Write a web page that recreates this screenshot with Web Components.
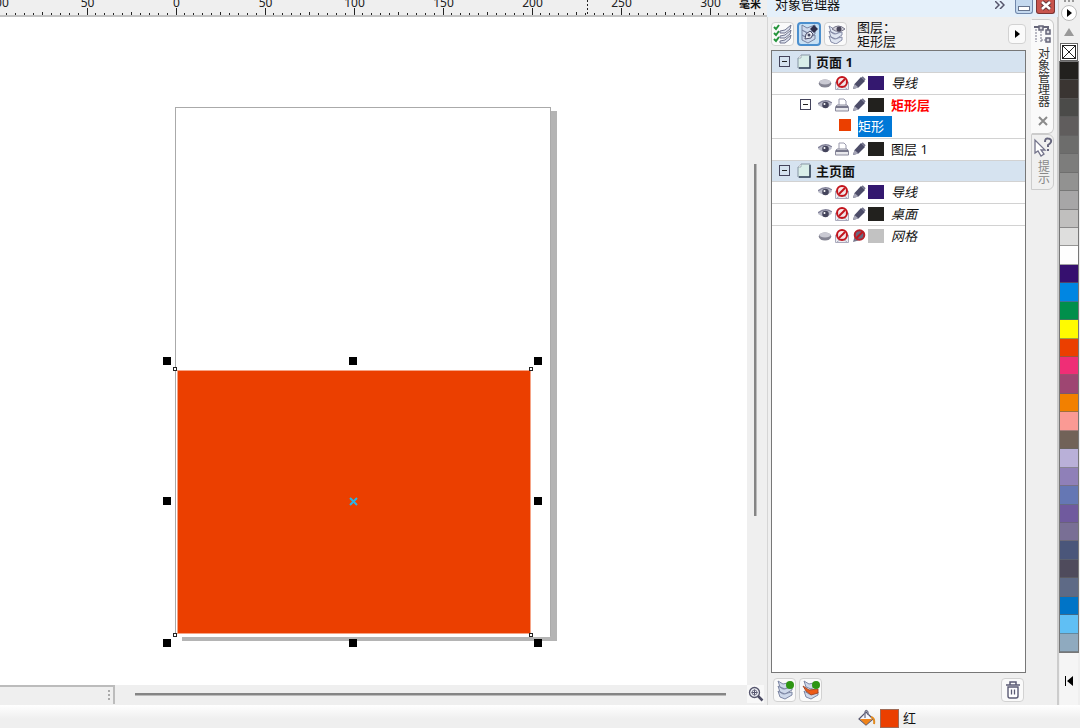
<!DOCTYPE html>
<html lang="zh-CN">
<head>
<meta charset="utf-8">
<title>对象管理器</title>
<style>
  body { margin: 0; background: #efefef; color: #111; font: 13px/16px "Noto Sans", "Noto Sans CJK SC", sans-serif; }
</style>
</head>
<body>
<draw-app></draw-app>

<script>
const BASE = `*{box-sizing:border-box} button{margin:0;padding:0;border:0;background:none;font:inherit;color:inherit;display:grid;place-items:center} svg{display:block}`;

function define(name, css, render) {
  customElements.define(name, class extends HTMLElement {
    connectedCallback() {
      if (this.shadowRoot) return;
      const t = document.createElement('template');
      t.innerHTML = `<style>${BASE}${css}</style>${render(this)}`;
      this.attachShadow({ mode: 'open' }).append(t.content.cloneNode(true));
    }
  });
}

const ban = (x) => `<circle cx="${x}" cy="6" r="5" fill="#f6e4e4" fill-opacity=".7" stroke="#c3141c" stroke-width="2"/><path d="M${x - 3} 9L${x + 3} 3" stroke="#c3141c" stroke-width="2"/>`;
const ICONS = {
  eye: [14, 12, `<path d="M0 6Q7-1 14 5Q8 12 0 6Z" fill="#b9bac8"/><path d="M0 5Q7-1 14 4" fill="none" stroke="#83839a" stroke-width="1.4"/><circle cx="7.5" cy="6" r="3.3" fill="#45455c"/><circle cx="6.5" cy="5" r="1" fill="#fff"/>`],
  closed: [14, 12, `<ellipse cx="7" cy="6.5" rx="6.3" ry="4" fill="#858593"/><ellipse cx="7" cy="5" rx="5.6" ry="2.6" fill="#cacad3"/>`],
  printer: [14, 14, `<path d="M4 8V1h5l2 2v5" fill="#fff" stroke="#9a9aad"/><path d="M2 7h10l1.500 2v4H.5V9z" fill="#e8e8ec" stroke="#8a8a9c"/><path d="M1 9h12" stroke="#55556c" stroke-width="1.5"/>`],
  noprint: [14, 14, `<path d="M.5 6h13v7.500H.5z" fill="#ededf1" stroke="#aaaabc"/><path d="M2 13l5-4 5 4" fill="none" stroke="#aaaabc"/>${ban(7)}`],
  pencil: [14, 14, `<path d="M1 13l1.500-5L9 1l4 4L6.500 11.500z" fill="#4c4c68"/><path d="M1 13l1.500-5 4 3.500z" fill="#a6a6b7"/><path d="M10 1l3 3" stroke="#73738c" stroke-width="2"/>`],
  nopencil: [14, 14, `<path d="M1 13l1.500-5L9 1l4 4L6.500 11.500z" fill="#77778c"/><circle cx="7.5" cy="6" r="4.800" fill="#696980" stroke="#b8202a" stroke-width="2"/><path d="M4.500 9l6-6" stroke="#c3141c" stroke-width="2"/>`],
  page: [14, 15, `<path d="M4 1h9v13H1V4z" fill="#d9eee9" stroke="#8795a4"/><path d="M13 2v12H2" fill="none" stroke="#34445b" stroke-width="1.5"/><path d="M4 1v3H1" fill="#fff" stroke="#8795a4" stroke-width=".7"/>`],
  props: [20, 20, `${[3, 9, 15].map(y => `<path d="M1 ${y}l2 2 3-4" fill="none" stroke="#23943a" stroke-width="2"/>`).join('')}${[15, 10, 5].map(y => `<path d="M7 ${y + 2}l5-1 6-5-1 4-5 4h-5z" fill="#dfe4f0" stroke="#70758f"/>`).join('')}`],
  edit: [20, 20, `${[14, 9, 4].map(y => `<path d="M3 ${y - 3}l5 3 8-3v4l-7 4-6-3z" fill="#cdd9ec" stroke="#707a99" stroke-width=".9"/>`).join('')}<path d="M6 15l1-5 4-3 3 3-2 4z" fill="#eceff6" stroke="#4c4e69"/><path d="M15 1l4 4-4 4-4-4z" fill="#30304b"/><circle cx="10" cy="11" r="1.5" fill="#444764"/>`],
  view: [20, 20, `${[15, 10, 5].map(y => `<path d="M3 ${y - 3}l5 3 8-2v3l-6 4-5-2z" fill="#dfe5f1" stroke="#7a819f" stroke-width=".9"/>`).join('')}<path d="M6 5Q12-1 19 5Q13 10 6 5Z" fill="#d3d2db" stroke="#77778b"/><circle cx="13" cy="5" r="2.5" fill="#464459"/>`],
  newlayer: [20, 20, `${[14, 9, 4].map(y => `<path d="M3 ${y - 3}l5 3 9-2v3l-7 4-5-2z" fill="#ced8ea" stroke="#737d9c" stroke-width=".9"/>`).join('')}<circle cx="15" cy="5" r="4" fill="#2d9513"/>`],
  newmaster: [20, 20, `${[14, 4].map(y => `<path d="M3 ${y - 3}l5 3 9-2v3l-7 4-5-2z" fill="#ced8ea" stroke="#737d9c" stroke-width=".9"/>`).join('')}<path d="M2 6l6 4 9-1v4l-7 2-5-4z" fill="#ed5a17" stroke="#9b4427" stroke-width=".9"/><circle cx="15" cy="5" r="4" fill="#2d9513"/>`],
  trash: [16, 18, `<path d="M1 4h14M5 4V1h6v3" fill="none" stroke="#5b5b74" stroke-width="1.5"/><path d="M3 6h10v9q0 2-2 2H5q-2 0-2-2z" fill="#fff" stroke="#5b5b74" stroke-width="1.4"/><path d="M6.5 8.5v5M9.5 8.5v5" stroke="#5b5b74" stroke-width="1.3"/>`],
  tree: [20, 20, `<path d="M6 2h4v4H6zM13 6h4v4h-4zM13 14h4v4h-4z" fill="#d9d9e0" stroke="#666679" stroke-width="1.5"/><path d="M1 3h5M10 3h5v3" fill="none" stroke="#666679" stroke-width="2"/><path d="M3 5v13M8 7v11M8 16h5" stroke="#77778a" stroke-dasharray="2 1" fill="none"/>`],
  hint: [20, 20, `<path d="M2 3v13l3-2 3 5 3-2-3-4h4z" fill="#fff" stroke="#74748b" stroke-width="1.3"/><path d="M12 5q0-4 3-3.500q4 .5 3 3.500q-.5 1.500-3 3v2" fill="none" stroke="#67677e" stroke-width="2"/><path d="M14 12h2v2h-2z" fill="#67677e"/>`],
  zoom: [16, 16, `<circle cx="6.500" cy="6.500" r="5" fill="#eef0f5" stroke="#55556d" stroke-width="1.3"/><path d="M3.500 6.500h6M6.500 3.500v6" stroke="#55556d"/><circle cx="6.500" cy="6.500" r="2.500" fill="none" stroke="#77778c"/><path d="M10 10l4.500 4.500" stroke="#4e4e66" stroke-width="2.500"/>`],
  bucket: [18, 18, `<path d="M8 3l7 7-7 6-7-6z" fill="#f6f6fa" stroke="#56566e" stroke-width="1.2"/><path d="M2 10h12l-6 6z" fill="#f08318"/><path d="M7 9V3q1-3 3 0v3" fill="none" stroke="#77778c" stroke-width="1.3"/><path d="M13 8q4 1 3 7" fill="none" stroke="#e18a20" stroke-width="2"/>`],
  right: [5, 8, `<path d="M0 0l5 4-5 4z" fill="#000"/>`],
  up: [10, 8, `<path d="M5 0l5 8H0z" fill="#999"/>`],
  first: [9, 12, `<path d="M0 1h1v10H0zM8 1v10L2 6z" fill="#000"/>`],
  more: [10, 8, `<path d="M1 0l4 4-4 4M6 0l4 4-4 4" transform="translate(-1)" fill="none" stroke="#55556b" stroke-width="1.5"/>`],
  x: [10, 10, `<path d="M1 1l8 8M9 1l-8 8" stroke="#8b8b8b" stroke-width="2"/>`],
};
define('app-icon', `:host{display:block;flex:none}`, el => {
  const [w, h, body] = ICONS[el.getAttribute('name')];
  return `<svg width="${w}" height="${h}" viewBox="0 0 ${w} ${h}" aria-hidden="true">${body}</svg>`;
});

define('tool-button', `
  :host{display:block;flex:none}
  button{width:23px;height:24px;border:1px solid #d2d2d2;border-radius:4px;background:#fafafa}
  :host([active]) button{width:24px;background:#c7e0f4;border:2px solid #4b8fce}
  :host([narrow]) button{width:18px;height:20px}`,
  el => `<button type="button" aria-label="${el.getAttribute('label')}"><app-icon name="${el.getAttribute('icon')}"></app-icon></button>`);

define('canvas-ruler', `
  :host{display:block;position:relative;height:17px;overflow:hidden;background:#efefef;border-bottom:2px solid #c2c2c2}
  .labels{display:flex;margin-left:-46px;font:12px/10px "Noto Sans",sans-serif;height:8px;color:#222}
  .labels span{flex:none;width:89px;height:8px;text-align:center;margin-top:-2px}
  svg{position:absolute;inset:0}
  .unit{position:absolute;right:6px;top:-5px;font:bold 11px/16px "Noto Sans CJK SC",sans-serif}`,
  () => {
    let d = '';
    for (let i = -19; i <= 66; i++) {
      const x = Math.round(175.5 + i * 8.9);
      const top = i % 10 === 0 ? 8 : i % 5 === 0 ? 12 : 13;
      d += `M${x} ${top}h1V15h-1z`;
    }
    return `<div class="labels">${[100, 50, 0, 50, 100, 150, 200, 250, 300].map(n => `<span>${n}</span>`).join('')}</div>
      <svg width="100%" height="15" aria-hidden="true"><path d="${d}" fill="#222"/><path d="M587.5 0V15" stroke="#222" stroke-dasharray="2 2"/></svg>
      <span class="unit">毫米</span>`;
  });

/* Free canvas: the page, the drawn rectangle and its selection handles keep document coordinates. */
define('drawing-canvas', `
  :host{display:block;position:relative;overflow:hidden;background:#fff}
  svg{position:absolute;inset:0;width:100%;height:100%}`,
  () => {
    const handles = [361, 501, 643].flatMap(y => [167, 353, 538].map(x => [x, y])).filter(([x, y]) => !(x === 353 && y === 501));
    const nodes = [369, 635].flatMap(y => [175, 531].map(x => [x, y]));
    return `<svg role="img" aria-label="矩形"><g transform="translate(0 -17)">
      <path d="M550 111h7v530H182v-4h368z" fill="#b4b4b4"/>
      <rect x="175.5" y="107.500" width="375" height="528" fill="#fff" stroke="#aaa"/>
      <path d="M176 635h374v2H176z" fill="#fff"/>
      <rect x="177" y="370" width="354" height="264" fill="#f6a486"/>
      <rect x="178" y="371" width="352" height="262" fill="#eb3f00"/>
      ${handles.map(([x, y]) => `<rect x="${x - 4}" y="${y - 4}" width="8" height="8"/>`).join('')}
      ${nodes.map(([x, y]) => `<rect x="${x - 1.5}" y="${y - 1.5}" width="3" height="3" fill="#fff" stroke="#222"/>`).join('')}
      <path d="M350 498l7 7M357 498l-7 7" stroke="#2ab4e6" stroke-width="2"/></g></svg>`;
  });

define('work-area', `
  :host{display:grid;grid-template:17px minmax(0,1fr) 20px / minmax(0,1fr) 20px;min-width:0}
  canvas-ruler{grid-column:1/3}
  .v{display:grid;grid-template-rows:147fr 352fr 169fr;justify-items:center;padding-right:4px}
  .v i{grid-row:2;width:3px;background:#858585;border:1px solid #bbb;border-width:0 1px 0 0}
  .h{display:flex;align-items:center}
  .tabs{width:115px;height:19px;align-self:start;border:2px solid #bcbcbc;border-width:2px 2px 0 0;display:flex;justify-content:flex-end;align-items:center;padding-right:3px}
  .grip{width:2px;height:11px;background:repeating-linear-gradient(#aaa 0 2px,transparent 2px 4px)}
  .h b{flex:1;height:3px;margin:0 21px 2px 20px;background:#858585;border-bottom:1px solid #bbb}
  .z{width:17px;height:18px;background:#f8f8f8}`,
  () => `<canvas-ruler></canvas-ruler><drawing-canvas></drawing-canvas>
    <div class="v"><i></i></div>
    <div class="h"><div class="tabs"><span class="grip"></span></div><b></b></div>
    <button class="z" type="button" aria-label="缩放"><app-icon name="zoom"></app-icon></button>`);

define('tree-row', `
  :host{display:flex;align-items:center;height:22px;padding:0 0 2px 46px;border-top:1px solid #d2d2d2}
  :host([kind=page]){height:21px;padding-left:7px;padding-bottom:1px;background:#d6e3f0;font-weight:bold}
  :host([expandable]){padding-left:28px}
  :host([kind=object]){padding-left:67px;padding-bottom:1px;border-top:0}
  .exp{width:11px;height:11px;border:1px solid #44445c;background:#fff;margin-right:7px}
  :host([kind=page]) .exp{background:none}
  .exp::before{content:"";width:5px;height:1px;background:#222}
  .icons{display:flex;align-items:center;gap:3px}
  .swatch{width:16px;height:14px;margin-left:-1px;background:var(--c)}
  .name{margin-left:7px;white-space:nowrap}
  :host([kind=page]) .name{margin-left:5px}
  :host([current]) .name{color:#f00;font-weight:bold}
  :host([italic]) .name{font-style:italic}
  :host([kind=object]) .swatch{width:12px;height:12px;margin:-3px 0 0}
  :host([kind=object]) .name{padding-right:8px;background:#0078d7;color:#fff;line-height:21px}`,
  el => {
    const kind = el.getAttribute('kind');
    const sw = `<span class="swatch" style="--c:${el.getAttribute('color')}"></span>`;
    const exp = kind === 'page' || el.hasAttribute('expandable') ? `<button class="exp" type="button" aria-label="折叠"></button>` : '';
    const lead = kind === 'page' ? `<app-icon name="page"></app-icon>` : kind === 'object' ? sw
      : `<span class="icons">${el.getAttribute('icons').split(' ').map(n => `<app-icon name="${n}"></app-icon>`).join('')}${sw}</span>`;
    return `${exp}${lead}<span class="name"><slot></slot></span>`;
  });

define('object-manager', `
  :host{display:flex;flex-direction:column;min-width:0;min-height:0;padding:0 5px 0 3px;border-left:1px solid #d5d5d5}
  .tools{display:flex;align-items:center;gap:3px;height:33px}
  .tools p{margin:0 0 0 7px;line-height:14px;flex:1}
  .list{flex:1;min-height:0;background:#fff;border:1px solid #777}
  .list tree-row:first-child{border-top-color:#d6e3f0}
  .foot{display:flex;align-items:center;gap:3px;height:32px;padding:2px 2px 0}
  .foot :last-child{margin-left:auto}`,
  () => `<div class="tools"><tool-button icon="props" label="显示对象属性"></tool-button><tool-button active icon="edit" label="跨图层编辑"></tool-button><tool-button icon="view" label="图层管理器视图"></tool-button>
      <p>图层：<br>矩形层</p><tool-button narrow icon="right" label="选项"></tool-button></div>
    <div class="list">
      <tree-row kind="page">页面 1</tree-row>
      <tree-row italic icons="closed noprint pencil" color="#34186f">导线</tree-row>
      <tree-row expandable current icons="eye printer pencil" color="#22211e">矩形层</tree-row>
      <tree-row kind="object" color="#eb3f00">矩形</tree-row>
      <tree-row icons="eye printer pencil" color="#22211e">图层 1</tree-row>
      <tree-row kind="page">主页面</tree-row>
      <tree-row italic icons="eye noprint pencil" color="#34186f">导线</tree-row>
      <tree-row italic icons="eye noprint pencil" color="#22211e">桌面</tree-row>
      <tree-row italic icons="closed noprint nopencil" color="#c2c2c2">网格</tree-row>
    </div>
    <div class="foot"><tool-button icon="newlayer" label="新建图层"></tool-button><tool-button icon="newmaster" label="新建主图层"></tool-button><tool-button icon="trash" label="删除"></tool-button></div>`);

define('docker-tabs', `
  :host{display:block;border-right:1px solid #ccc;padding-right:1px}
  .tab{display:flex;flex-direction:column;align-items:center;width:23px;border:1px solid #ccc;border-radius:0 6px 6px 0;color:#333}
  .tab span{writing-mode:vertical-rl;font-size:12px;line-height:16px}
  .one{height:115px;margin-top:2px;padding-top:4px;background:#fafafa;border-left-color:#fafafa}
  .one .close{margin-top:9px}
  .two{height:56px;padding-top:2px;background:#f0f0f0;color:#888}
  .two span{margin-top:3px}
  .open{display:flex;flex-direction:column;align-items:center;gap:3px}`,
  () => `<div class="tab one"><button class="open" type="button"><app-icon name="tree"></app-icon><span>对象管理器</span></button><button class="close" type="button" aria-label="关闭"><app-icon name="x"></app-icon></button></div>
    <button class="tab two" type="button"><app-icon name="hint"></app-icon><span>提示</span></button>`);

define('docker-panel', `
  :host{display:grid;grid-template:17px minmax(0,1fr) / minmax(0,1fr) 27px;min-height:0}
  header{grid-column:1/3;display:flex;align-items:flex-start;gap:3px;padding:0 3px 0 8px;background:#e5f0fa;overflow:hidden}
  h1{margin:-5px 0 0;flex:1;font:13px/18px "Noto Sans CJK SC",sans-serif}
  .more{margin:1px 7px 0 0}
  .win{width:18px;height:14px;border:1px solid #7188ac;border-top:0;border-radius:0 0 3px 3px;background:#c4d9ef}
  .win.close{width:19px;border-color:#7b3534;background:#c8554e}`,
  () => `<header><h1>对象管理器</h1><button class="more" type="button" aria-label="更多"><app-icon name="more"></app-icon></button>
      <button class="win" type="button" aria-label="最小化"><svg width="12" height="12"><rect x=".5" y="5.500" width="11" height="4" fill="#fff" stroke="#66758f"/></svg></button>
      <button class="win close" type="button" aria-label="关闭"><svg width="14" height="13"><path d="M3 2l8 7M11 2l-8 7" stroke="#66353a" stroke-width="4.500"/><path d="M3 2l8 7M11 2l-8 7" stroke="#fff" stroke-width="2.500"/></svg></button></header>
    <object-manager></object-manager><docker-tabs></docker-tabs>`);

const COLORS = ['#22211e','#3a3532','#4b4b49','#605d5d','#6d6d6c','#7d7d7c','#929291','#a7a6a7','#c0bfbe','#dededd','#fefefe',
  '#36106f','#0086e2','#008f4b','#fffb00','#eb3f00','#ef2e76','#9e4672','#f28000','#fa9a94','#716258','#b9b0d8','#8f80b8','#6577b4','#705a9e','#796f95','#4a567a','#4f4b5c','#5e6a86','#0074c7','#60bff4','#8faabf'];
define('color-palette', `
  :host{display:flex;flex-direction:column;min-height:0;padding-right:1px;align-items:center;border-left:1px solid #ccc}
  .dots{height:5px;width:11px;background:radial-gradient(circle at 1px 1px,#999 1px,transparent 1px) 0 0/4px 4px repeat-x}
  .round{width:16px;height:16px;border:1px solid #bbb;border-radius:8px;background:#fff}
  .up{height:22px;width:18px}
  .none{width:18px;height:18px;background:#fff;border:1px solid #666}
  .colors{flex:1;min-height:0;width:20px;display:flex;flex-direction:column;border:1px solid #777}
  .colors button{flex:1;min-height:0;width:100%;background:var(--c);border-bottom:1px solid #66666699}
  .first{height:52px;width:18px;padding-top:4px;background:#f5f5f5}`,
  () => `<span class="dots"></span><button class="round" type="button" aria-label="调色板菜单"><app-icon name="right"></app-icon></button>
    <button class="up" type="button" aria-label="向上滚动"><app-icon name="up"></app-icon></button>
    <button class="none" type="button" aria-label="无填充"><svg width="16" height="16"><path d="M2 2l12 12M14 2L2 14" stroke="#222"/><rect x="1.500" y="1.500" width="13" height="13" fill="none" stroke="#222"/></svg></button>
    <div class="colors">${COLORS.map(c => `<button type="button" aria-label="${c}" style="--c:${c}"></button>`).join('')}</div>
    <button class="first" type="button" aria-label="展开"><app-icon name="first"></app-icon></button>`);

define('status-bar', `
  :host{display:flex;align-items:center;justify-content:flex-end;gap:4px;height:23px;padding:3px 164px 0 0;background:linear-gradient(#fff,#efefef 60%)}
  i{width:19px;height:19px;background:#eb3f00;border:1px solid #a06a55}`,
  () => `<app-icon name="bucket"></app-icon><i></i><span>红</span>`);

define('draw-app', `
  :host{display:grid;height:100vh;grid-template:minmax(0,1fr) auto / minmax(0,1fr) 291px 22px;overflow:hidden}
  status-bar{grid-column:1/-1}`,
  () => `<work-area></work-area><docker-panel></docker-panel><color-palette></color-palette><status-bar></status-bar>`);
</script>
</body>
</html>
